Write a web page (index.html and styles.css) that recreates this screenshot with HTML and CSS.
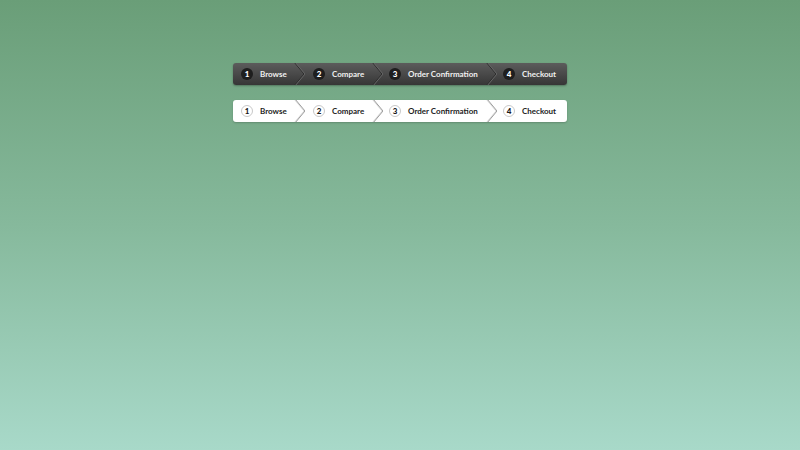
FILE: index.html
```html
<!DOCTYPE html>
<html lang="en">
<head>
    <meta charset="UTF-8">
    <title>Checkout Steps</title>
    <link rel="stylesheet" href="styles.css">
</head>
<body>
    <div class="wrap">
        <div class="steps dark">
            <div class="step browse"><span class="num">1</span>Browse</div>
            <svg class="sep" viewBox="0 0 11 22"><polyline class="sep-a" points="0,-1 10,11 0,23"/><polyline class="sep-b" points="1,-1 11,11 1,23"/></svg>
            <div class="step compare"><span class="num">2</span>Compare</div>
            <svg class="sep" viewBox="0 0 11 22"><polyline class="sep-a" points="0,-1 10,11 0,23"/><polyline class="sep-b" points="1,-1 11,11 1,23"/></svg>
            <div class="step confirm"><span class="num">3</span>Order Confirmation</div>
            <svg class="sep" viewBox="0 0 11 22"><polyline class="sep-a" points="0,-1 10,11 0,23"/><polyline class="sep-b" points="1,-1 11,11 1,23"/></svg>
            <div class="step checkout"><span class="num">4</span>Checkout</div>
        </div>

        <div class="steps light">
            <div class="step browse"><span class="num">1</span>Browse</div>
            <svg class="sep" viewBox="0 0 11 22"><polyline class="sep-a" points="0,-1 10,11 0,23"/><polyline class="sep-b" points="1,-1 11,11 1,23"/></svg>
            <div class="step compare"><span class="num">2</span>Compare</div>
            <svg class="sep" viewBox="0 0 11 22"><polyline class="sep-a" points="0,-1 10,11 0,23"/><polyline class="sep-b" points="1,-1 11,11 1,23"/></svg>
            <div class="step confirm"><span class="num">3</span>Order Confirmation</div>
            <svg class="sep" viewBox="0 0 11 22"><polyline class="sep-a" points="0,-1 10,11 0,23"/><polyline class="sep-b" points="1,-1 11,11 1,23"/></svg>
            <div class="step checkout"><span class="num">4</span>Checkout</div>
        </div>
    </div>
</body>
</html>
```

FILE: styles.css
```css
html, body {
    margin: 0;
    padding: 0;
    height: 100%;
}

body {
    font-family: 'Lato', sans-serif;
    background: linear-gradient(to bottom, #6a9e78 0%, #86b99c 50%, #a8d9c9 100%);
}

.wrap {
    display: flex;
    flex-direction: column;
    align-items: center;
    gap: 15px;
    padding-top: 63px;
}

.steps {
    display: flex;
    align-items: stretch;
    height: 22px;
    width: 334px;
    border-radius: 3px;
    font-size: 8px;
    font-weight: 700;
    overflow: hidden;
    white-space: nowrap;
}

.step {
    display: flex;
    align-items: center;
    gap: 7px;
    padding-left: 8px;
    box-sizing: border-box;
    flex: none;
}

.browse { width: 61px; }
.compare { width: 67px; }
.confirm { width: 103px; padding-left: 6px; }
.checkout { flex: 1; padding-left: 6px; }

.num {
    display: flex;
    align-items: center;
    justify-content: center;
    width: 12px;
    height: 12px;
    border-radius: 50%;
    font-size: 8px;
    font-weight: 900;
    box-sizing: border-box;
}

.sep {
    width: 11px;
    height: 22px;
    flex: none;
}

.sep polyline {
    fill: none;
    stroke-width: 1;
}

/* dark bar */
.dark {
    background: linear-gradient(to bottom, #5c5c5c, #363636);
    color: #f0f0f0;
    box-shadow: 0 1px 2px rgba(0, 0, 0, 0.3);
}

.dark .num {
    background: #1e1e1e;
    color: #fff;
}

.dark .sep-a {
    stroke: #2c2c2c;
}

.dark .sep-b {
    stroke: #666;
}

/* light bar */
.light {
    background: #fff;
    color: #222;
    box-shadow: 0 1px 2px rgba(0, 0, 0, 0.2);
}

.light .num {
    background: #fff;
    border: 1px solid #c8c8c8;
    color: #1a1a1a;
}

.light .sep-a {
    stroke: #dcdcdc;
}

.light .sep-b {
    stroke: #9a9a9a;
}
```
